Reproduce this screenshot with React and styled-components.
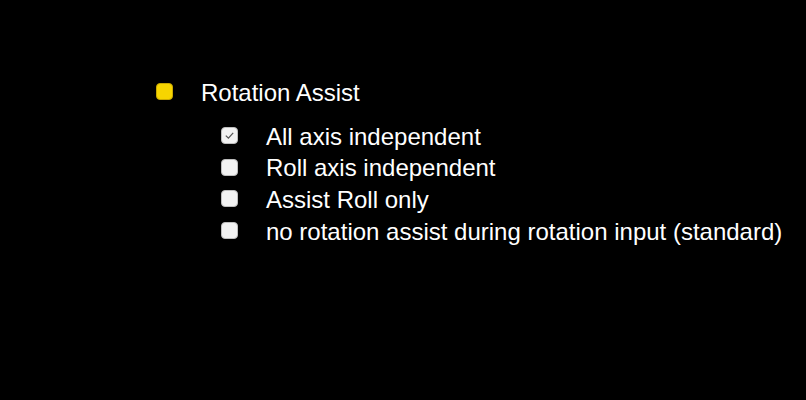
import React from "react";
import styled, { createGlobalStyle } from "styled-components";

const Global = createGlobalStyle`
  html, body { margin: 0; padding: 0; background: #000; }
  body { font-family: "Liberation Sans", Arial, sans-serif; }
`;

const Page = styled.div`
  width: 806px;
  height: 400px;
  background: #000;
  box-sizing: border-box;
  padding: 77px 0 0 156px;
  color: #fff;
`;

const Heading = styled.div`
  display: flex;
  align-items: center;
  gap: 28px;
  font-size: 24px;
  line-height: 31.67px;
`;

const Swatch = styled.span`
  width: 17px;
  height: 17px;
  box-sizing: border-box;
  border-radius: 4px;
  background: #f7d500;
  border: 1px solid #c9a800;
  flex: none;
  margin-bottom: 2px;
`;

const List = styled.div`
  display: flex;
  flex-direction: column;
  margin: 12px 0 0 65px;
`;

const Option = styled.label`
  display: flex;
  align-items: center;
  gap: 28px;
  font-size: 24px;
  line-height: 31.67px;
`;

const Box = styled.span`
  width: 17px;
  height: 17px;
  border-radius: 4px;
  background: #f2f2f2;
  border: 1px solid #bdbdbd;
  box-sizing: border-box;
  flex: none;
  display: flex;
  align-items: center;
  justify-content: center;
  margin-bottom: 2px;
`;

const options = [
  { label: "All axis independent", checked: true },
  { label: "Roll axis independent" },
  { label: "Assist Roll only" },
  { label: "no rotation assist during rotation input (standard)" },
];

export default function App() {
  return (
    <>
      <Global />
      <Page>
        <Heading>
          <Swatch />
          <span>Rotation Assist</span>
        </Heading>
        <List>
          {options.map((o) => (
            <Option key={o.label}>
              <Box>
                {o.checked && (
                  <svg width="11" height="11" viewBox="0 0 11 11">
                    <path d="M1.8 5.6 L4.4 8.2 L9.2 2.8" fill="none" stroke="#555" strokeWidth="1.2" />
                  </svg>
                )}
              </Box>
              <span>{o.label}</span>
            </Option>
          ))}
        </List>
      </Page>
    </>
  );
}
